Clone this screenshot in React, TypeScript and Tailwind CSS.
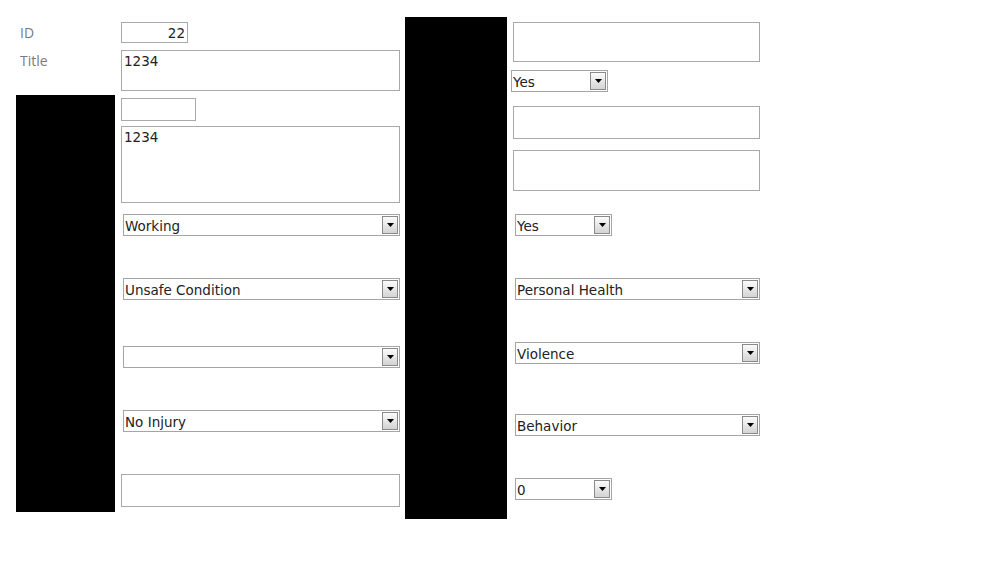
const font = "font-['DejaVu_Sans',sans-serif] text-[13.5px] text-[#222]"

function Box({ className = '', children }: { className?: string; children?: React.ReactNode }) {
  return (
    <div className={`border border-[#a9a9a9] bg-white px-[2px] pt-[2px] leading-[16px] ${font} ${className}`}>
      {children}
    </div>
  )
}

function Select({ value = '', className = '' }: { value?: string; className?: string }) {
  return (
    <div className={`flex h-[22px] items-center border border-[#a5a5a5] bg-white pl-[1px] ${font} ${className}`}>
      <span className="flex-1 truncate pt-[2px] leading-[20px]">{value}</span>
      <span className="m-[1px] flex h-[18px] w-[16px] items-center justify-center border border-[#8a8a8a] bg-gradient-to-b from-[#fbfbfb] to-[#d3d3d3]">
        <svg width="7" height="4" viewBox="0 0 7 4">
          <path d="M0 0h7L3.5 4z" fill="#000" />
        </svg>
      </span>
    </div>
  )
}

export default function App() {
  return (
    <div className="flex h-[570px] w-[991px] items-start bg-white">
      {/* labels + masked column */}
      <div className="ml-[16px] flex w-[99px] flex-col">
        <div className="mt-[24px] pl-[4px] font-['Open_Sans',sans-serif] text-[14px] leading-[18px] text-[#7a7a7a]">ID</div>
        <div className="mt-[10px] pl-[4px] font-['Open_Sans',sans-serif] text-[14px] leading-[18px] text-[#7a7a7a]">Title</div>
        <div className="mt-[25px] h-[417px] bg-black" />
      </div>

      {/* left fields */}
      <div className="ml-[6px] flex w-[279px] flex-col pt-[22px]">
        <Box className="h-[21px] w-[67px] text-right">22</Box>
        <Box className="mt-[7px] h-[41px] w-[279px]">1234</Box>
        <Box className="mt-[7px] h-[23px] w-[75px]" />
        <Box className="mt-[5px] h-[77px] w-[279px]">1234</Box>
        <Select value="Working" className="ml-[2px] mt-[11px] w-[277px]" />
        <Select value="Unsafe Condition" className="ml-[2px] mt-[42px] w-[277px]" />
        <Select className="ml-[2px] mt-[46px] w-[277px]" />
        <Select value="No Injury" className="ml-[2px] mt-[42px] w-[277px]" />
        <Box className="mt-[42px] h-[33px] w-[279px]" />
      </div>

      {/* masked column */}
      <div className="ml-[5px] mt-[17px] h-[502px] w-[102px] bg-black" />

      {/* right fields */}
      <div className="ml-[4px] flex w-[249px] flex-col pt-[22px]">
        <Box className="ml-[2px] h-[40px] w-[247px]" />
        <Select value="Yes" className="mt-[8px] w-[97px]" />
        <Box className="ml-[2px] mt-[14px] h-[33px] w-[247px]" />
        <Box className="ml-[2px] mt-[11px] h-[41px] w-[247px]" />
        <Select value="Yes" className="ml-[4px] mt-[23px] w-[97px]" />
        <Select value="Personal Health" className="ml-[4px] mt-[42px] w-[245px]" />
        <Select value="Violence" className="ml-[4px] mt-[42px] w-[245px]" />
        <Select value="Behavior" className="ml-[4px] mt-[50px] w-[245px]" />
        <Select value="0" className="ml-[4px] mt-[42px] w-[97px]" />
      </div>
    </div>
  )
}
